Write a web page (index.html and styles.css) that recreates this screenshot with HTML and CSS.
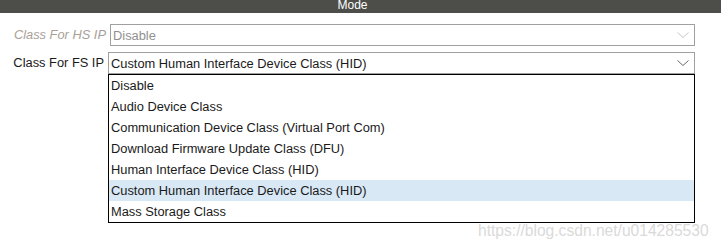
FILE: index.html
```html
<!DOCTYPE html>
<html lang="en">
<head>
    <meta charset="UTF-8">
    <title>Mode</title>
    <link rel="stylesheet" href="styles.css">
</head>
<body>
    <div class="mode-bar">Mode</div>

    <div class="form">
        <div class="row row-hs">
            <label class="label disabled">Class For HS IP</label>
            <div class="select disabled">
                <span class="value">Disable</span>
                <svg class="chevron" width="12" height="7" viewBox="0 0 12 7"><path d="M0.5 0.5 L6 5.5 L11.5 0.5" fill="none" stroke="#c8c8c8" stroke-width="1"/></svg>
            </div>
        </div>

        <div class="row row-fs">
            <label class="label">Class For FS IP</label>
            <div class="select-wrap">
                <div class="select">
                    <span class="value">Custom Human Interface Device Class (HID)</span>
                    <svg class="chevron" width="12" height="7" viewBox="0 0 12 7"><path d="M0.5 0.5 L6 5.5 L11.5 0.5" fill="none" stroke="#6a6a6a" stroke-width="1"/></svg>
                </div>
                <ul class="options">
                    <li>Disable</li>
                    <li>Audio Device Class</li>
                    <li>Communication Device Class (Virtual Port Com)</li>
                    <li>Download Firmware Update Class (DFU)</li>
                    <li>Human Interface Device Class (HID)</li>
                    <li class="selected">Custom Human Interface Device Class (HID)</li>
                    <li>Mass Storage Class</li>
                </ul>
            </div>
        </div>
    </div>

    <div class="watermark">https://blog.csdn.net/u014285530</div>
</body>
</html>
```

FILE: styles.css
```css
body {
    margin: 0;
    font-family: "Liberation Sans", Arial, sans-serif;
    font-size: 12.85px;
    color: #1a1a1a;
    background-color: white;
    width: 721px;
    height: 247px;
    overflow: hidden;
    position: relative;
}
.mode-bar {
    height: 13px;
    background-color: #4d4e4a;
    color: white;
    text-align: center;
    font-size: 12px;
    line-height: 11px;
    overflow: hidden;
    padding-right: 16px;
}
.form {
    padding-top: 11px;
    width: 695px;
}
.row {
    display: flex;
    align-items: center;
}
.row-fs {
    margin-top: 6px;
    align-items: flex-start;
}
.label {
    text-align: right;
    white-space: nowrap;
    line-height: 22px;
}
.row-hs .label {
    width: 106px;
    padding-right: 4px;
}
.row-fs .label {
    width: 104px;
    padding-right: 4px;
}
.label.disabled {
    color: #a8a098;
    font-style: italic;
}
.select-wrap {
    flex: 1;
    position: relative;
}
.select {
    flex: 1;
    height: 20px;
    border: 1px solid #a0a0a0;
    display: flex;
    align-items: center;
    justify-content: space-between;
    padding: 0 4px 0 2px;
}
.select.disabled .value {
    color: #909090;
}
.chevron {
    margin-right: 1px;
}
.options {
    position: absolute;
    left: 0;
    right: 0;
    top: 22px;
    margin: 0;
    padding: 0;
    list-style: none;
    border: 1px solid #000;
    background-color: white;
}
.options li {
    height: 21px;
    line-height: 21px;
    padding-left: 2px;
}
.options li.selected {
    background-color: #d9e8f5;
}
.watermark {
    position: absolute;
    left: 478px;
    top: 222px;
    font-size: 15.6px;
    color: #dadada;
}
```
